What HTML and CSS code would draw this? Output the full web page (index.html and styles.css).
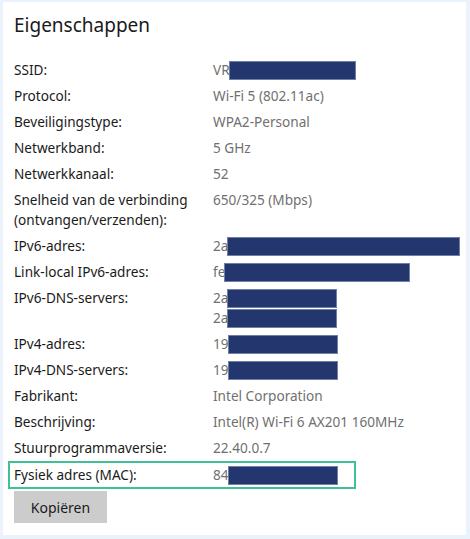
FILE: index.html
```html
<!DOCTYPE html>
<html lang="nl">
<head>
<meta charset="utf-8">
<title>Eigenschappen</title>
<link rel="stylesheet" href="styles.css">
</head>
<body>
<div class="panel">
  <h1 class="title">Eigenschappen</h1>
  <div class="props">
    <div class="row"><div class="label">SSID:</div><div class="value">VR<span class="redact" style="width:125px"></span></div></div>
    <div class="row"><div class="label">Protocol:</div><div class="value">Wi-Fi 5 (802.11ac)</div></div>
    <div class="row"><div class="label">Beveiligingstype:</div><div class="value">WPA2-Personal</div></div>
    <div class="row"><div class="label">Netwerkband:</div><div class="value">5 GHz</div></div>
    <div class="row"><div class="label">Netwerkkanaal:</div><div class="value">52</div></div>
    <div class="row"><div class="label">Snelheid van de verbinding<br>(ontvangen/verzenden):</div><div class="value">650/325 (Mbps)</div></div>
    <div class="row"><div class="label">IPv6-adres:</div><div class="value">2a<span class="redact" style="width:231px"></span></div></div>
    <div class="row"><div class="label">Link-local IPv6-adres:</div><div class="value">fe<span class="redact" style="width:184px"></span></div></div>
    <div class="row"><div class="label">IPv6-DNS-servers:</div><div class="value">2a<span class="redact" style="width:108px"></span><br>2a<span class="redact" style="width:108px"></span></div></div>
    <div class="row"><div class="label">IPv4-adres:</div><div class="value">19<span class="redact" style="width:108px"></span></div></div>
    <div class="row"><div class="label">IPv4-DNS-servers:</div><div class="value">19<span class="redact" style="width:108px"></span></div></div>
    <div class="row"><div class="label">Fabrikant:</div><div class="value">Intel Corporation</div></div>
    <div class="row"><div class="label">Beschrijving:</div><div class="value">Intel(R) Wi-Fi 6 AX201 160MHz</div></div>
    <div class="row"><div class="label">Stuurprogrammaversie:</div><div class="value">22.40.0.7</div></div>
    <div class="row highlight"><div class="label">Fysiek adres (MAC):</div><div class="value">84<span class="redact" style="width:108px"></span></div></div>
  </div>
  <button class="copy" type="button">Kopiëren</button>
</div>
</body>
</html>
```
FILE: styles.css
```css
html, body {
  margin: 0;
  padding: 0;
  height: 100%;
}
body {
  background: #eaf3fb;
  font-family: "Segoe UI", "Noto Sans", "Open Sans", sans-serif;
  padding: 2px 4px 4px 3px;
  box-sizing: border-box;
}
.panel {
  background: #ffffff;
  height: 100%;
  box-sizing: border-box;
  padding: 9px 10px 0 11px;
}
.title {
  margin: 0;
  font-size: 19px;
  font-weight: 400;
  line-height: 28px;
  color: #1a1a1a;
}
.props {
  display: flex;
  flex-direction: column;
  gap: 6px;
  margin-top: 21px;
}
.row {
  display: flex;
  font-size: 13.6px;
  line-height: 20px;
}
.label {
  width: 199px;
  flex: none;
  color: #1a1a1a;
}
.value {
  color: #707070;
  white-space: nowrap;
}
.redact {
  display: inline-block;
  height: 17px;
  vertical-align: -4px;
  background: #23366d;
  box-shadow: 0 0 0 1px #6f7fa8;
}
.highlight {
  margin: -3px 0 0 -6px;
  width: 340px;
  border: 2px solid #40c097;
  padding: 2px 0 2px 4px;
}
.copy {
  margin-top: 2px;
  width: 93px;
  height: 32px;
  border: none;
  background: #cccccc;
  font-family: inherit;
  font-size: 14px;
  color: #1a1a1a;
  padding: 0;
}
```
